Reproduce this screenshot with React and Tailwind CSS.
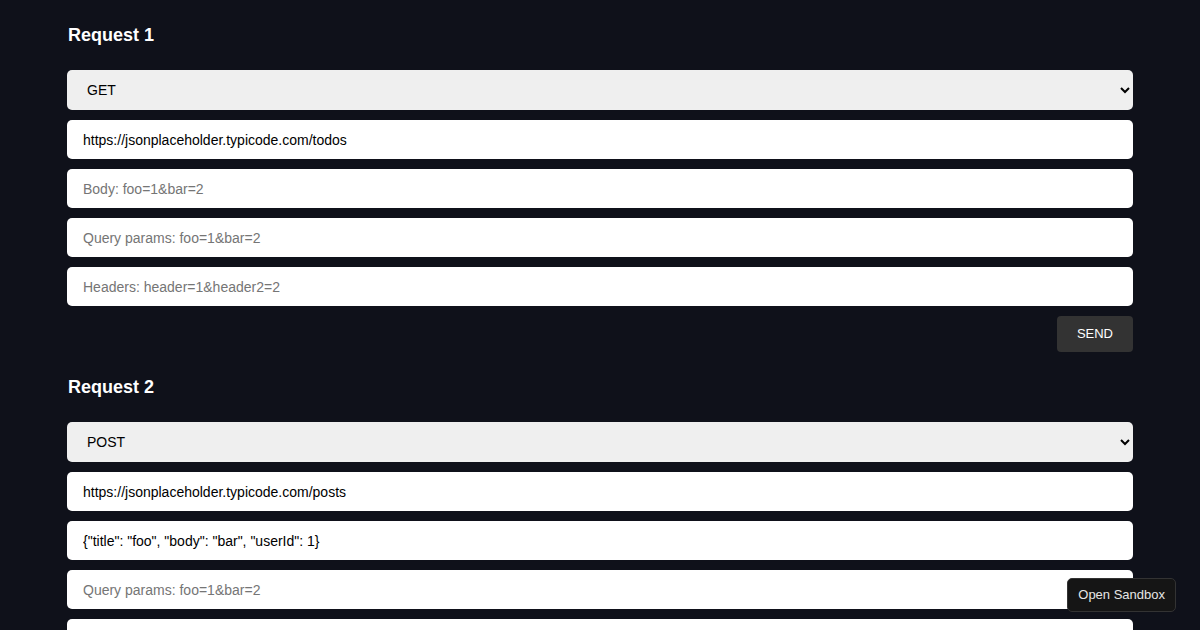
import React from "react";

const inputCls =
  "h-[39px] w-full rounded-[5px] bg-white text-black text-[14px] px-4 outline-none placeholder:text-[#757575] font-['Liberation_Sans',Arial,sans-serif]";

function Section({ title, method, url, body, query, headers }) {
  return (
    <section className="pt-[21px] flex flex-col">
      <h2 className="text-[18px] leading-7 font-bold text-white mb-[21px] pl-px">{title}</h2>
      <div className="flex flex-col gap-[10px]">
        <select
          defaultValue={method}
          className="h-[40px] w-full rounded-[5px] bg-[#efefef] text-black text-[14px] px-4 outline-none font-['Liberation_Sans',Arial,sans-serif]"
        >
          <option>GET</option>
          <option>POST</option>
          <option>PUT</option>
          <option>DELETE</option>
        </select>
        <input defaultValue={url} className={inputCls} />
        <input defaultValue={body} placeholder="Body: foo=1&bar=2" className={inputCls} />
        <input defaultValue={query} placeholder="Query params: foo=1&bar=2" className={inputCls} />
        <input defaultValue={headers} placeholder="Headers: header=1&header2=2" className={inputCls} />
        <div className="flex justify-end">
          <button className="h-[36px] px-5 rounded-[4px] bg-[#333333] text-white text-[13px] font-['Liberation_Sans',Arial,sans-serif]">
            SEND
          </button>
        </div>
      </div>
    </section>
  );
}

export default function App() {
  return (
    <div className="min-h-[630px] bg-[#0f111a] font-['Liberation_Sans',Arial,sans-serif]">
      <div className="w-[1066px] mx-auto flex flex-col">
        <Section title="Request 1" method="GET" url="https://jsonplaceholder.typicode.com/todos" />
        <Section
          title="Request 2"
          method="POST"
          url="https://jsonplaceholder.typicode.com/posts"
          body={'{"title": "foo", "body": "bar", "userId": 1}'}
        />
      </div>
      <button className="fixed bottom-[18px] right-[24px] h-[34px] px-[10px] rounded-[5px] bg-[#151515] border border-[#333333] text-[#e6e6e6] text-[13px] font-['Liberation_Sans',Arial,sans-serif]">
        Open Sandbox
      </button>
    </div>
  );
}
